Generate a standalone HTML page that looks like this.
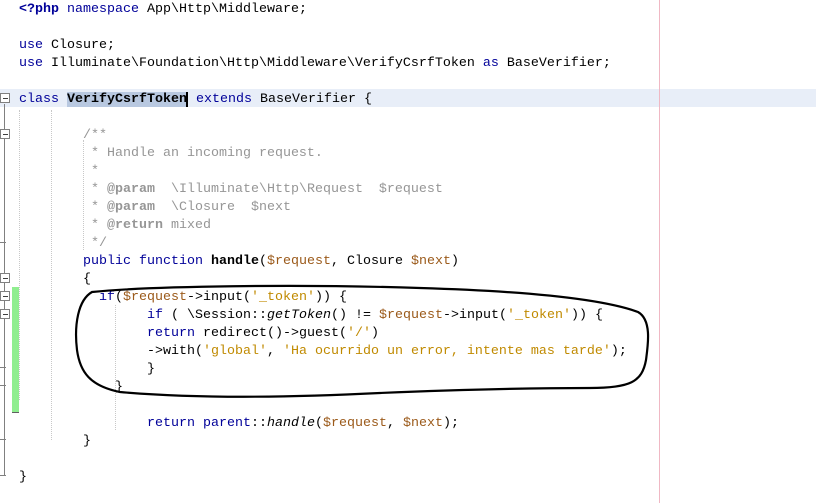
<!DOCTYPE html>
<html><head><meta charset="utf-8"><style>
html,body{margin:0;padding:0;background:#fff;width:816px;height:503px;overflow:hidden;position:relative}
pre{position:absolute;left:19px;top:1px;margin:0;font-family:"Liberation Mono",monospace;font-size:13.33px;line-height:18px;color:#000;z-index:2}
.k{color:#000099}.v{color:#9b5a1a}.s{color:#c08a00}.c{color:#969696}.b{font-weight:bold}
.hl{position:absolute;left:0;top:89px;width:816px;height:18px;background:#e8eef8;z-index:0}
.sel{background:#b8c8e0}
.mar{position:absolute;left:659px;top:0;width:1px;height:503px;background:#f0b8c4;z-index:1}
.green{position:absolute;left:12px;top:287px;width:7px;height:125px;background:#90ee90;border-bottom:1px solid #606060;z-index:1}
.g{position:absolute;top:110px;width:0;border-left:1px dotted #c8c8c8;z-index:1}
.fl{position:absolute;left:4px;width:1px;background:#808080;z-index:1}
.fb{position:absolute;left:0;width:8px;height:8px;border:1px solid #808080;background:#fff;z-index:2}
.fb:after{content:"";position:absolute;left:2px;top:4px;width:5px;height:1px;background:#404040}
.tk{position:absolute;left:0;width:6px;height:1px;background:#808080;z-index:1}
</style></head><body>
<div class="hl"></div>
<div class="mar"></div>
<div class="g" style="left:19px;height:290px;top:110px"></div>
<div class="g" style="left:51px;height:330px;top:110px"></div>
<div class="g" style="left:83px;height:110px;top:140px"></div>
<div class="g" style="left:115px;height:125px;top:305px"></div>
<div class="fl" style="top:104px;height:372px"></div>
<div class="fb" style="top:93px"></div>
<div class="fb" style="top:129px"></div>
<div class="fb" style="top:273px"></div>
<div class="fb" style="top:291px"></div>
<div class="fb" style="top:309px"></div>
<div class="tk" style="top:242px"></div>
<div class="tk" style="top:367px"></div>
<div class="tk" style="top:385px"></div>
<div class="tk" style="top:439px"></div>
<div class="tk" style="top:475px"></div>
<div class="green"></div>
<pre><span class="k"><span class="b">&lt;?php</span> namespace</span> App\Http\Middleware;

<span class="k">use</span> Closure;
<span class="k">use</span> Illuminate\Foundation\Http\Middleware\VerifyCsrfToken <span class="k">as</span> BaseVerifier;

<span class="k">class</span> <span class="b sel">VerifyCsrfToken</span><span style="border-left:2px solid #000;margin-left:-1px"></span> <span class="k">extends</span> BaseVerifier {

        <span class="c">/**</span>
<span class="c">         * Handle an incoming request.</span>
<span class="c">         *</span>
<span class="c">         * <b>@param</b>  \Illuminate\Http\Request  $request</span>
<span class="c">         * <b>@param</b>  \Closure  $next</span>
<span class="c">         * <b>@return</b> mixed</span>
<span class="c">         */</span>
        <span class="k">public function</span> <b>handle</b>(<span class="v">$request</span>, Closure <span class="v">$next</span>)
        {
          <span class="k">if</span>(<span class="v">$request</span>-&gt;input(<span class="s">'_token'</span>)) {
                <span class="k">if</span> ( \Session::<i>getToken</i>() != <span class="v">$request</span>-&gt;input(<span class="s">'_token'</span>)) {
                <span class="k">return</span> redirect()-&gt;guest(<span class="s">'/'</span>)
                -&gt;with(<span class="s">'global'</span>, <span class="s">'Ha ocurrido un error, intente mas tarde'</span>);
                }
            }

                <span class="k">return</span> <span class="k">parent</span>::<i>handle</i>(<span class="v">$request</span>, <span class="v">$next</span>);
        }

}</pre>
<svg width="816" height="503" style="position:absolute;left:0;top:0;z-index:3" fill="none" stroke="#000" stroke-width="2.2" stroke-linecap="round">
<path d="M92,292 C150,286 300,284 420,288 C520,291 600,298 638,312 C652,320 648,345 646,360 C642,382 630,388 590,388 C520,388 450,390 380,393 C300,397 200,399 120,392 C90,386 80,372 77,350 C74,325 78,300 92,292 Z"/>
</svg>
</body></html>
